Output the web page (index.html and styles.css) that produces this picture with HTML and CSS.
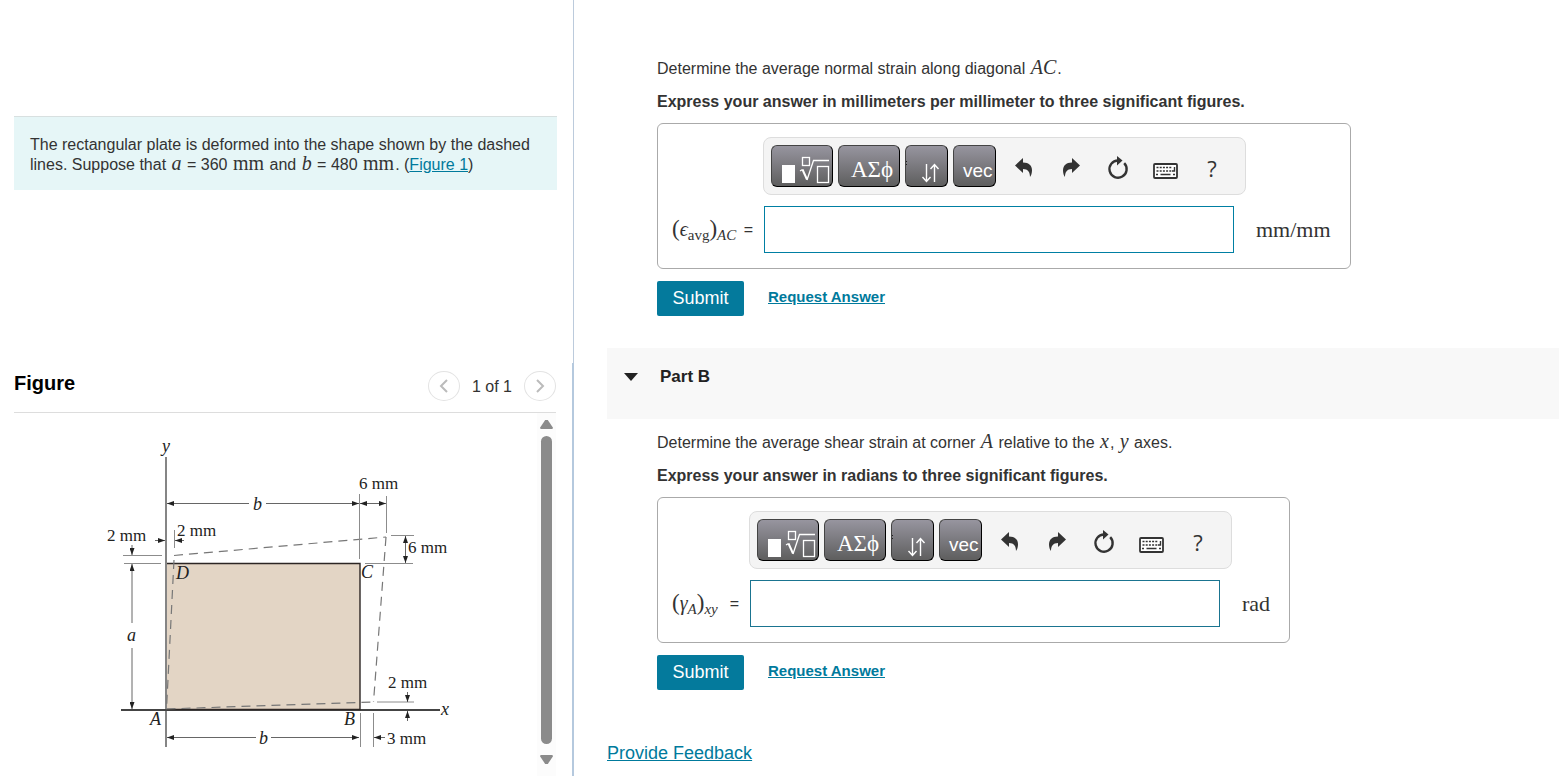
FILE: index.html
```html
<!DOCTYPE html>
<html lang="en">
<head>
  <meta charset="UTF-8">
  <title>Average Normal and Shear Strain</title>
  <link rel="stylesheet" href="styles.css">
</head>
<body>
  <!-- shared icons -->
  <svg class="defs" width="0" height="0" aria-hidden="true">
    <symbol id="i-root" viewBox="0 0 60 40">
      <rect x="10" y="19" width="13" height="18" fill="#fff"/>
      <g fill="none" stroke="#fff" stroke-width="1.3">
        <rect x="30.5" y="11.5" width="7" height="8"/>
        <path d="M28 25l2.500-1.500" />
        <path d="M30.500 23.500l4.500 10" stroke-width="2"/>
        <path d="M35 34l6.500-19.500h15.500"/>
        <rect x="45.500" y="20.500" width="11" height="16"/>
      </g>
    </symbol>
    <symbol id="i-arrows" viewBox="0 0 40 40">
      <g fill="none" stroke="#fff" stroke-width="1.4">
        <path d="M20.500 18v17M16.500 31l4 4.500 4-4.500"/>
        <path d="M28.500 36v-17M24.500 23l4-4.500 4 4.500"/>
      </g>
      <path d="M0 15h1v1h-1zM0 18h1v1h-1z" fill="#222"/>
    </symbol>
    <symbol id="i-undo" viewBox="0 0 18 20">
      <path d="M0 7.500L8 0v4.500c6 0 9 3 9 8 0 2.500-.8 5-2 6.500 0-5-2-8-7-8v4z" fill="#333"/>
    </symbol>
    <symbol id="i-redo" viewBox="0 0 18 20">
      <path d="M18 7.500L10 0v4.500c-6 0-9 3-9 8 0 2.500.8 5 2 6.500 0-5 2-8 7-8v4z" fill="#333"/>
    </symbol>
    <symbol id="i-reset" viewBox="0 0 22 24">
      <path d="M11 4.500a8.600 8.600 0 1 0 6.200 2.600" fill="none" stroke="#333" stroke-width="2.400"/>
      <path d="M10 0l5.500 4.500L10 9.500z" fill="#333"/>
    </symbol>
    <symbol id="i-keys" viewBox="0 0 25 16">
      <rect x="1" y="1" width="23" height="14" rx="1" fill="#fff" stroke="#333" stroke-width="1.800"/>
      <path d="M3.500 4.500h16M3.500 8h15" stroke="#333" stroke-width="1.600" stroke-dasharray="2 1.200" fill="none"/>
      <path d="M7.500 11.500h10M3 11.500h2M20 11.500h2M19 8h2.500v-4" stroke="#333" stroke-width="1.400" fill="none"/>
    </symbol>
  </svg>

  <div class="layout">
    <aside class="side">
      <div class="problem">
        <p class="intro">The rectangular plate is deformed into the shape shown by the dashed lines. Suppose that <i class="m">a</i> = 360 <span class="m">mm</span> and <i class="m">b</i> = 480 <span class="m">mm</span>. (<a href="#figure">Figure 1</a>)</p>
      </div>

      <section class="figure-panel" id="figure">
        <div class="figure-head">
          <h2>Figure</h2>
          <div class="pager">
            <button type="button" aria-label="Previous figure" disabled><svg width="10" height="14" viewBox="0 0 10 14"><path d="M8 1L2 7l6 6"/></svg></button>
            <span>1 of 1</span>
            <button type="button" aria-label="Next figure" disabled><svg width="10" height="14" viewBox="0 0 10 14"><path d="M2 1l6 6-6 6"/></svg></button>
          </div>
        </div>
        <div class="figure-view">
          <svg class="diagram" width="380" height="330" viewBox="0 0 380 330" role="img" aria-label="Rectangular plate ABCD with its deformed shape">
            <defs>
              <marker id="ar" markerWidth="8" markerHeight="5" refX="7" refY="2.500" orient="auto-start-reverse" markerUnits="userSpaceOnUse">
                <path d="M0 0l7 2.500-7 2.500z" fill="#222"/>
              </marker>
            </defs>
            <rect x="76" y="133.500" width="194" height="146" fill="#e3d5c5"/>
            <!-- axes -->
            <path class="axis" d="M76 27v290"/>
            <path d="M31 280h319" stroke="#444" stroke-width="1.800"/>
            <path d="M77 133.500h193v146h-193" fill="none" stroke="#2c2624" stroke-width="1.400"/>
            <!-- deformed shape -->
            <g class="dash">
              <path d="M84 125.500l212-18.500"/>
              <path d="M296 107l-12.500 165"/>
              <path d="M76.500 279l207-7"/>
              <path d="M84 130l-7.500 149"/>
            </g>
            <!-- extension lines -->
            <g class="ext">
              <path d="M269.500 64v65M296.500 66v37M301 105.500h23M275 133.500h48M84.500 100v18M33 125.500h39M34 133.500h37"/>
              <path d="M270.500 283v34M283.500 283v34M287 272h37"/>
            </g>
            <!-- dimensions -->
            <g class="dim">
              <path d="M159 73.500H77" marker-end="url(#ar)"/>
              <path d="M176 73.500h93" marker-end="url(#ar)"/>
              <path d="M270 73.500h26" marker-start="url(#ar)" marker-end="url(#ar)"/>
              <path d="M315.500 106v27" marker-start="url(#ar)" marker-end="url(#ar)"/>
              <path d="M65 110.500h10" marker-end="url(#ar)"/>
              <path d="M94 110.500h-9" marker-end="url(#ar)"/>
              <path d="M42 115v10" marker-end="url(#ar)"/>
              <path d="M42 193v-59" marker-end="url(#ar)"/>
              <path d="M42 218v61" marker-end="url(#ar)"/>
              <path d="M166 307.500H77" marker-end="url(#ar)"/>
              <path d="M181 307.500h88" marker-end="url(#ar)"/>
              <path d="M295 307.500h-11" marker-end="url(#ar)"/>
              <path d="M317.500 262v10" marker-end="url(#ar)"/>
              <path d="M317.500 291v-10" marker-end="url(#ar)"/>
            </g>
            <text x="269" y="59">6 mm</text>
            <text x="318" y="123">6 mm</text>
            <text x="17" y="111">2 mm</text>
            <text x="87" y="106">2 mm</text>
            <text x="298" y="258">2 mm</text>
            <text x="297" y="314">3 mm</text>
            <g class="var">
              <text x="72" y="22">y</text>
              <text x="163" y="80">b</text>
              <text x="169" y="314">b</text>
              <text x="37" y="211">a</text>
              <text x="351" y="285">x</text>
              <text x="60" y="295">A</text>
              <text x="254" y="295">B</text>
              <text x="271" y="148">C</text>
              <text x="86" y="149">D</text>
            </g>
          </svg>
          <div class="scroll">
            <span class="up"></span>
            <span class="thumb"></span>
            <span class="down"></span>
          </div>
        </div>
      </section>
    </aside>

    <main class="parts">
      <section class="part">
        <p>Determine the average normal strain along diagonal <i class="m">AC</i>.</p>
        <p class="how">Express your answer in millimeters per millimeter to three significant figures.</p>
        <form class="answer">
          <div class="toolbar">
            <button type="button" class="key wide" aria-label="Templates"><svg width="60" height="40"><use href="#i-root"/></svg></button>
            <button type="button" class="key wide greek">ΑΣϕ</button>
            <button type="button" class="key" aria-label="Subscript and superscript"><svg width="40" height="40"><use href="#i-arrows"/></svg></button>
            <button type="button" class="key vec">vec</button>
            <button type="button" class="tool first" aria-label="Undo"><svg width="18" height="20"><use href="#i-undo"/></svg></button>
            <button type="button" class="tool" aria-label="Redo"><svg width="18" height="20"><use href="#i-redo"/></svg></button>
            <button type="button" class="tool" aria-label="Reset"><svg width="22" height="24"><use href="#i-reset"/></svg></button>
            <button type="button" class="tool low" aria-label="Keyboard shortcuts"><svg width="25" height="16"><use href="#i-keys"/></svg></button>
            <button type="button" class="tool help">?</button>
          </div>
          <label for="ansA" class="long"><span class="eq"><span class="par">(</span><i>ϵ</i><sub>avg</sub><span class="par">)</span><sub><i>AC</i></sub></span><span>=</span></label>
          <input type="text" id="ansA" class="active">
          <span class="unit">mm/mm</span>
        </form>
        <div class="actions">
          <button type="button" class="submit">Submit</button>
          <a href="#">Request Answer</a>
        </div>
      </section>

      <h2 class="part-head"><span class="caret"></span>Part B</h2>

      <section class="part">
        <p>Determine the average shear strain at corner <i class="m">A</i> relative to the <i class="m">x</i>, <i class="m">y</i> axes.</p>
        <p class="how">Express your answer in radians to three significant figures.</p>
        <form class="answer">
          <div class="toolbar">
            <button type="button" class="key wide" aria-label="Templates"><svg width="60" height="40"><use href="#i-root"/></svg></button>
            <button type="button" class="key wide greek">ΑΣϕ</button>
            <button type="button" class="key" aria-label="Subscript and superscript"><svg width="40" height="40"><use href="#i-arrows"/></svg></button>
            <button type="button" class="key vec">vec</button>
            <button type="button" class="tool first" aria-label="Undo"><svg width="18" height="20"><use href="#i-undo"/></svg></button>
            <button type="button" class="tool" aria-label="Redo"><svg width="18" height="20"><use href="#i-redo"/></svg></button>
            <button type="button" class="tool" aria-label="Reset"><svg width="22" height="24"><use href="#i-reset"/></svg></button>
            <button type="button" class="tool low" aria-label="Keyboard shortcuts"><svg width="25" height="16"><use href="#i-keys"/></svg></button>
            <button type="button" class="tool help">?</button>
          </div>
          <label for="ansB" class="short"><span class="eq"><span class="par">(</span><i>γ</i><sub><i>A</i></sub><span class="par">)</span><sub><i>xy</i></sub></span><span>=</span></label>
          <input type="text" id="ansB">
          <span class="unit">rad</span>
        </form>
        <div class="actions">
          <button type="button" class="submit">Submit</button>
          <a href="#">Request Answer</a>
        </div>
      </section>

      <a class="feedback" href="#">Provide Feedback</a>
    </main>
  </div>
</body>
</html>
```

FILE: styles.css
```css
* { box-sizing: border-box; }
body { margin: 0; font-family: "Liberation Sans", Arial, sans-serif; font-size: 16px; line-height: 20px; color: #333; background: #fff; }
p, h2 { margin: 0; }
a { color: #007a9c; }
button { font-family: inherit; padding: 0; cursor: pointer; }
.defs { position: absolute; }
.m { padding: 0 1px; font-family: "Liberation Serif", serif; font-size: 20px; line-height: 16px; }

.layout { display: flex; height: 100vh; overflow: hidden; }

/* left side */
.side { flex: 0 0 574px; display: flex; flex-direction: column; }
.problem { height: 363px; padding: 116px 16px 0 14px; border-right: 1px solid #bccbdc; }
.intro { padding: 18px 16px 15px; background: #e6f6f7; border-top: 1px solid #d8e0e0; }
.figure-panel { flex: 1; min-height: 0; display: flex; flex-direction: column; padding: 0 16px 0 14px; border-right: 2px solid #b5c9de; }
.figure-head { display: flex; justify-content: space-between; height: 50px; border-bottom: 1px solid #ddd; }
.figure-head h2 { font-size: 20px; line-height: 40px; color: #000; }
.pager { display: flex; align-items: center; gap: 12px; padding-bottom: 4px; }
.pager span { padding-top: 3px; }
.pager button { display: flex; align-items: center; justify-content: center; width: 32px; height: 30px; background: #fff; border: 1px solid #e3e3e3; border-radius: 50%; }
.pager path { fill: none; stroke: #bbb; stroke-width: 2; }
.figure-view { flex: 1; display: flex; justify-content: space-between; min-height: 0; }
.diagram { margin: 17px 0 0 76px; font-family: "Liberation Serif", serif; font-size: 17px; fill: #222; }
.axis { stroke: #858585; stroke-width: 2; }
.dash { stroke: #777; stroke-width: 1.2; stroke-dasharray: 9 6; }
.ext { stroke: #8c8c8c; stroke-width: 1; }
.dim { stroke: #666; stroke-width: 1; }
.var { font-style: italic; font-size: 18px; }
.scroll { display: flex; flex-direction: column; align-items: center; gap: 7px; width: 19px; padding: 7px 0 12px; background: #fcfcfc; }
.scroll .up, .scroll .down { width: 13px; height: 9px; background: #8b8b8b; clip-path: polygon(40% 0, 60% 0, 100% 85%, 95% 100%, 5% 100%, 0 85%); }
.scroll .down { transform: rotate(180deg); margin-top: 4px; }
.scroll .thumb { flex: 1; width: 11px; border-radius: 6px; background: #8b8b8b; }

/* right side */
.parts { flex: 1; padding: 45px 0 0 33px; }
.part { padding: 14px 0 32px 50px; }
.part p { margin-bottom: 13px; }
.part .how { font-weight: bold; margin-bottom: 11px; }
.answer { display: inline-grid; grid-template-columns: auto auto auto; align-items: center; padding: 13px 19px 15px 14px; border: 1px solid #aaa; border-radius: 6px; vertical-align: top; }
.toolbar { grid-column: 2 / 4; justify-self: start; display: flex; gap: 5px; width: 483px; height: 58px; padding: 7px; margin-bottom: 11px; background: #f4f4f4; border: 1px solid #ddd; border-radius: 8px; }
.key { width: 43px; height: 42px; overflow: hidden; text-align: left; color: #fff; background: linear-gradient(#97959f, #5e5e5e); border: 1px solid #444; border-right-color: #000; border-bottom-color: #000; border-radius: 6px; }
.key svg { display: block; }
.wide { width: 62px; }
.greek { font-family: "Liberation Serif", serif; font-size: 23px; padding: 7px 0 0 12px; }
.vec { font-size: 19px; padding: 9px 0 0 9px; }
.tool { display: flex; align-items: center; justify-content: center; width: 42px; height: 42px; padding-top: 3px; background: none; border: 0; color: #333; }
.first { margin-left: 2px; }
.low { padding-top: 9px; }
.help { font-family: "Open Sans", sans-serif; font-size: 22px; }
.answer label { display: flex; align-items: center; justify-content: space-between; padding-right: 10px; white-space: nowrap; }
.long { width: 91px; }
.short { width: 77px; }
.eq { font-family: "Liberation Serif", serif; font-size: 20px; }
.eq sub { font-size: 15px; line-height: 10px; vertical-align: -4px; }
.par { font-size: 23px; }
.answer input { width: 470px; height: 47px; margin-left: 1px; padding: 0 10px; font-size: 18px; border: 1px solid #1a7490; outline: none; }
.answer input.active, .answer input:focus { border-color: #007fa3; }
.unit { padding-left: 22px; font-family: "Liberation Serif", serif; font-size: 22px; }
.actions { display: flex; align-items: flex-start; gap: 24px; margin-top: 12px; }
.actions a { font-size: 15px; font-weight: bold; line-height: 32px; }
.submit { width: 87px; height: 35px; font-size: 18px; color: #fff; background: #047a9c; border: 0; border-radius: 2px; }
.part-head { display: flex; align-items: center; height: 71px; padding: 0 17px 14px; font-size: 17px; color: #222; background: #f8f8f8; }
.caret { margin-right: 22px; border: 7px solid transparent; border-top: 8px solid #222; border-bottom: 0; }
.feedback { display: inline-block; margin-top: 21px; font-size: 18px; }
```
